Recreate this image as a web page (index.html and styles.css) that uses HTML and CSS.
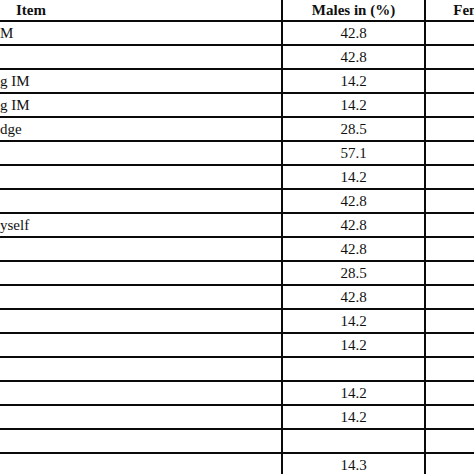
FILE: index.html
```html
<!DOCTYPE html>
<html>
<head>
<meta charset="utf-8">
<link rel="stylesheet" href="styles.css">
</head>
<body>
<div class="table">
  <div class="row head">
    <div class="cell c1 item">Item</div>
    <div class="cell c2">Males in (%)</div>
    <div class="cell c3">Females in (%)</div>
  </div>
  <div class="row"><div class="cell c1">M</div><div class="cell c2">42.8</div><div class="cell c3"></div></div>
  <div class="row"><div class="cell c1"></div><div class="cell c2">42.8</div><div class="cell c3"></div></div>
  <div class="row"><div class="cell c1">g IM</div><div class="cell c2">14.2</div><div class="cell c3"></div></div>
  <div class="row"><div class="cell c1">g IM</div><div class="cell c2">14.2</div><div class="cell c3"></div></div>
  <div class="row"><div class="cell c1">dge</div><div class="cell c2">28.5</div><div class="cell c3"></div></div>
  <div class="row"><div class="cell c1"></div><div class="cell c2">57.1</div><div class="cell c3"></div></div>
  <div class="row"><div class="cell c1"></div><div class="cell c2">14.2</div><div class="cell c3"></div></div>
  <div class="row"><div class="cell c1"></div><div class="cell c2">42.8</div><div class="cell c3"></div></div>
  <div class="row"><div class="cell c1">yself</div><div class="cell c2">42.8</div><div class="cell c3"></div></div>
  <div class="row"><div class="cell c1"></div><div class="cell c2">42.8</div><div class="cell c3"></div></div>
  <div class="row"><div class="cell c1"></div><div class="cell c2">28.5</div><div class="cell c3"></div></div>
  <div class="row"><div class="cell c1"></div><div class="cell c2">42.8</div><div class="cell c3"></div></div>
  <div class="row"><div class="cell c1"></div><div class="cell c2">14.2</div><div class="cell c3"></div></div>
  <div class="row"><div class="cell c1"></div><div class="cell c2">14.2</div><div class="cell c3"></div></div>
  <div class="row"><div class="cell c1"></div><div class="cell c2"></div><div class="cell c3"></div></div>
  <div class="row"><div class="cell c1"></div><div class="cell c2">14.2</div><div class="cell c3"></div></div>
  <div class="row"><div class="cell c1"></div><div class="cell c2">14.2</div><div class="cell c3"></div></div>
  <div class="row"><div class="cell c1"></div><div class="cell c2"></div><div class="cell c3"></div></div>
  <div class="row"><div class="cell c1"></div><div class="cell c2">14.3</div><div class="cell c3"></div></div>
</div>
</body>
</html>
```
FILE: styles.css
```css
html, body {
  margin: 0;
  padding: 0;
  background: #fff;
  overflow: hidden;
  width: 474px;
  height: 474px;
}
.table {
  width: 600px;
  font-family: "Liberation Serif", "Times New Roman", serif;
  font-size: 15px;
  color: #111;
}
.row {
  display: grid;
  grid-template-columns: 283px 143px 1fr;
  height: 24px;
  box-sizing: border-box;
  border-bottom: 2px solid #0a0a0a;
  line-height: 22px;
}
.row.head {
  height: 22px;
  line-height: 20px;
  font-weight: bold;
}
.cell {
  box-sizing: border-box;
  white-space: nowrap;
  overflow: hidden;
}
.c1 {
  border-right: 2px solid #0a0a0a;
  text-align: left;
}
.c2 {
  border-right: 2px solid #0a0a0a;
  text-align: center;
}
.c3 {
  width: 152px;
  text-align: center;
}
.item {
  padding-left: 16px;
}
```
